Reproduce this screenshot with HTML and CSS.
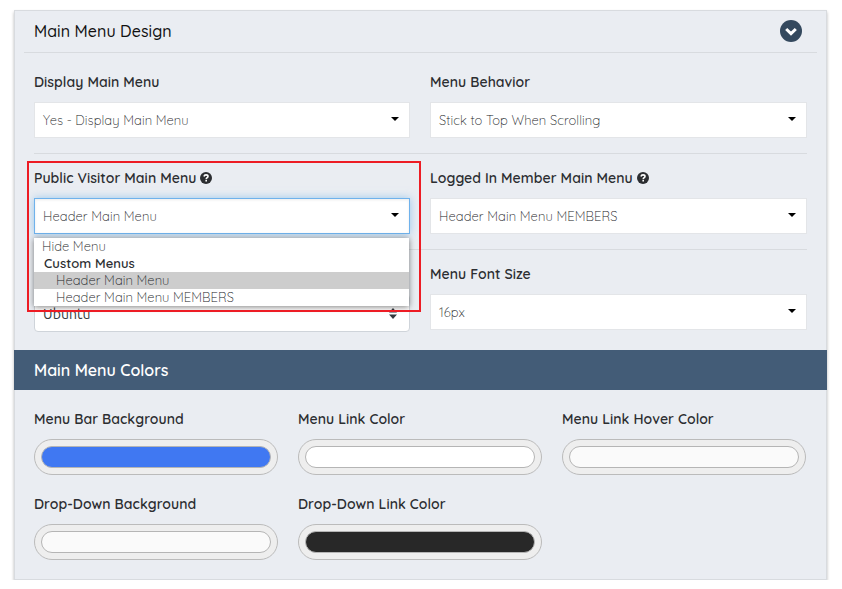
FILE: index.html
```html
<!DOCTYPE html>
<html lang="en">
<head>
<meta charset="utf-8">
<title>Main Menu Design</title>
<link rel="stylesheet" href="styles.css">
</head>
<body>
<main class="panel">
  <header class="panel-header">
    <h1 class="panel-title">Main Menu Design</h1>
    <svg class="toggle" viewBox="0 0 22 22"><circle cx="11" cy="11" r="11" fill="#34495e"/><path d="M6.200 9 11 13.600l4.800-4.600" fill="none" stroke="#fff" stroke-width="3"/></svg>
  </header>
  <section class="settings">
    <div class="row">
      <div class="field">
        <div class="label">Display Main Menu</div>
        <div class="select"><span>Yes - Display Main Menu</span><i class="caret"></i></div>
      </div>
      <div class="field">
        <div class="label">Menu Behavior</div>
        <div class="select"><span>Stick to Top When Scrolling</span><i class="caret"></i></div>
      </div>
    </div>
    <div class="row">
      <div class="field active">
        <div class="label">Public Visitor Main Menu<svg class="help" viewBox="0 0 12 12"><circle cx="6" cy="6" r="6" fill="#2c2e31"/><path d="M4 4.500C4.200 3.300 5 2.900 6 2.900c1.200 0 2 .7 2 1.600C8 5.700 6.200 5.700 6.200 7.200M6.200 8.100v1.500" fill="none" stroke="#fff" stroke-width="1.600"/></svg></div>
        <div class="select focused"><span>Header Main Menu</span><i class="caret"></i></div>
        <div class="options">
          <div class="option">Hide Menu</div>
          <div class="option group">Custom Menus</div>
          <div class="option nested selected">Header Main Menu</div>
          <div class="option nested">Header Main Menu MEMBERS</div>
        </div>
        <div class="highlight"></div>
      </div>
      <div class="field">
        <div class="label">Logged In Member Main Menu<svg class="help" viewBox="0 0 12 12"><circle cx="6" cy="6" r="6" fill="#2c2e31"/><path d="M4 4.500C4.200 3.300 5 2.900 6 2.900c1.200 0 2 .7 2 1.600C8 5.700 6.200 5.700 6.200 7.200M6.200 8.100v1.500" fill="none" stroke="#fff" stroke-width="1.600"/></svg></div>
        <div class="select"><span>Header Main Menu MEMBERS</span><i class="caret"></i></div>
      </div>
    </div>
    <div class="row">
      <div class="field">
        <div class="label"></div>
        <div class="select font-select"><span>Ubuntu</span><svg class="sort" viewBox="0 0 8 11"><path d="M0 4.500 4 0l4 4.500zM0 6.500h8L4 11z" fill="#343a40"/></svg></div>
      </div>
      <div class="field">
        <div class="label">Menu Font Size</div>
        <div class="select"><span>16px</span><i class="caret"></i></div>
      </div>
    </div>
  </section>
  <h2 class="band">Main Menu Colors</h2>
  <section class="colors">
    <div class="color"><div class="label">Menu Bar Background</div><div class="pill"><div class="swatch blue"></div></div></div>
    <div class="color"><div class="label">Menu Link Color</div><div class="pill"><div class="swatch white"></div></div></div>
    <div class="color"><div class="label">Menu Link Hover Color</div><div class="pill"><div class="swatch light"></div></div></div>
    <div class="color"><div class="label">Drop-Down Background</div><div class="pill"><div class="swatch light"></div></div></div>
    <div class="color"><div class="label">Drop-Down Link Color</div><div class="pill"><div class="swatch dark"></div></div></div>
  </section>
</main>
</body>
</html>
```
FILE: styles.css
```css
* { box-sizing: border-box; }
body {
  margin: 0;
  padding: 10px 15px 0 14px;
  background: #fff;
  font-family: Quicksand, Lato, sans-serif;
  color: #2c2e31;
}
.panel {
  height: 570px;
  background: #eaedf2;
  border: 1px solid #d8dbdf;
  box-shadow: 0 2px 3px rgba(0, 0, 0, .28);
}
.panel-header {
  display: flex;
  justify-content: space-between;
  align-items: center;
  height: 42px;
  margin: 0 9px;
  padding: 0 15px 2px 10px;
  border-bottom: 1px solid #d8dbdf;
}
.panel-title {
  margin: 0;
  font-size: 16px;
  font-weight: 500;
  letter-spacing: .05px;
  color: #111;
}
.toggle { width: 22px; height: 22px; }
.settings { padding: 5px 19px 0; height: 297px; }
.row {
  display: grid;
  grid-template-columns: 376px 377px;
  gap: 20px;
  height: 96px;
  padding-top: 14px;
  border-bottom: 1px solid #d8dbdf;
}
.row:last-child { border-bottom: 0; }
.field { position: relative; }
.label {
  display: flex;
  align-items: center;
  height: 20px;
  margin-bottom: 10px;
  font-size: 14px;
  font-weight: 600;
  letter-spacing: .06px;
  white-space: nowrap;
}
.help { width: 12px; height: 12px; margin-left: 4px; }
.select {
  display: flex;
  align-items: center;
  justify-content: space-between;
  height: 36px;
  padding: 0 10px 0 8px;
  background: #fff;
  border: 1px solid #e3e5e8;
  font-size: 13px;
  font-weight: 350;
  letter-spacing: .07px;
  color: #202225;
}
.caret {
  width: 8px;
  height: 4px;
  margin-bottom: 2px;
  background: #000;
  clip-path: polygon(0 0, 100% 0, 50% 100%);
}
.focused {
  border-color: #6fb2ec;
  box-shadow: 0 0 8px rgba(102, 175, 233, .6), inset 0 1px 3px rgba(0, 0, 0, .08);
}
.active { z-index: 2; }
.options {
  position: absolute;
  top: 70px;
  left: 0;
  width: 375px;
  background: #fff;
  box-shadow: 0 1px 6px rgba(0, 0, 0, .5);
  font-size: 13px;
  font-weight: 350;
  letter-spacing: .05px;
  color: #202225;
}
.option { height: 17px; padding-left: 8px; line-height: 17px; }
.group { padding-left: 10px; font-weight: 600; color: #2c2e31; }
.nested { padding-left: 22px; }
.selected { background: #cdcdcd; }
.highlight {
  position: absolute;
  top: -7px;
  left: -7px;
  width: 394px;
  height: 151px;
  border: 2px solid #ed1c24;
}
.font-select {
  height: 38px;
  padding-right: 12px;
  border-color: #cfd4da;
  border-radius: 4px;
  font-family: Ubuntu, "Noto Sans", sans-serif;
  font-size: 14px;
  font-weight: 400;
  color: #343a40;
}
.font-select span { padding-top: 2px; }
.sort { width: 8px; height: 11px; }
.band {
  display: flex;
  align-items: center;
  height: 40px;
  margin: 0 -1px;
  padding-left: 20px;
  background: #435c77;
  color: #fff;
  font-size: 16px;
  font-weight: 600;
}
.colors {
  display: grid;
  grid-template-columns: repeat(3, 244px);
  gap: 19px 20px;
  padding: 19px 19px 0;
}
.pill {
  height: 36px;
  padding: 6px;
  background: #eee;
  border: 1px solid #bbb;
  border-radius: 18px;
}
.swatch { height: 22px; border: 1px solid #b5b5b5; border-radius: 11px; }
.blue { background: #4078f2; }
.white { background: #fff; }
.light { background: #fafafa; }
.dark { background: #282828; }
```
